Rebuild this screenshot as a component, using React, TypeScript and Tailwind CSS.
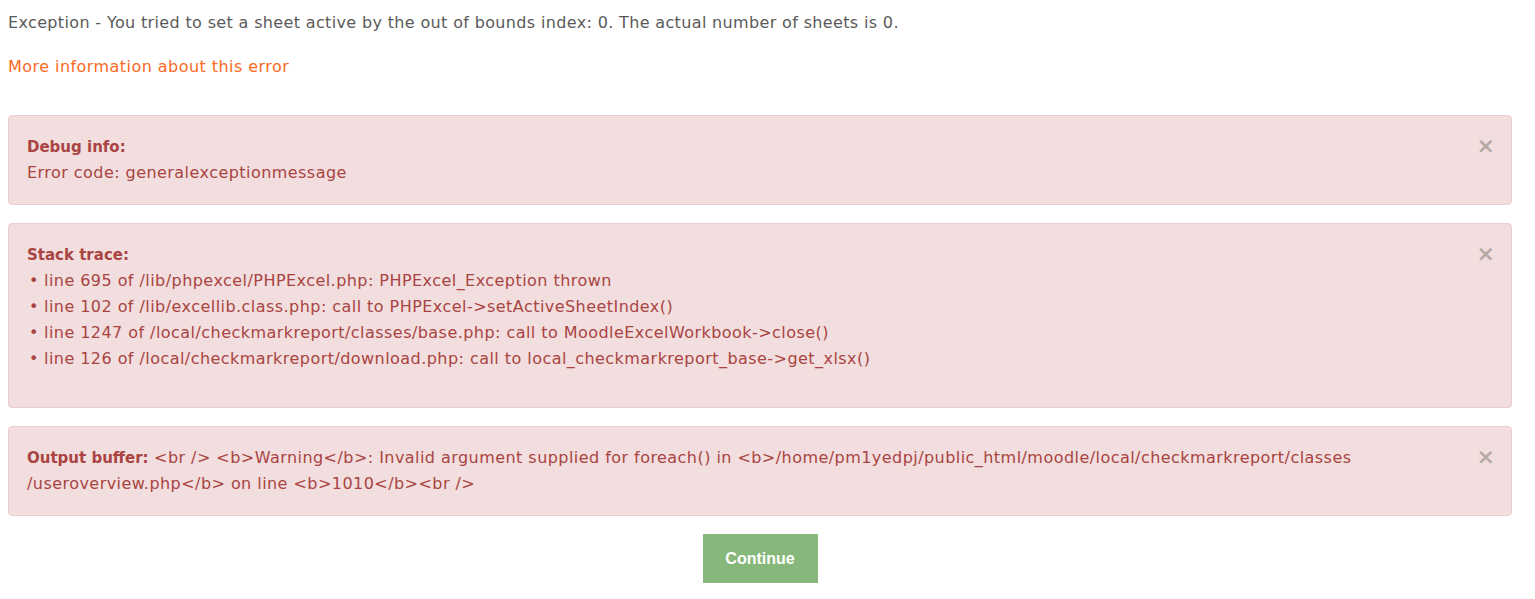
const stack = [
  'line 695 of /lib/phpexcel/PHPExcel.php: PHPExcel_Exception thrown',
  'line 102 of /lib/excellib.class.php: call to PHPExcel->setActiveSheetIndex()',
  'line 1247 of /local/checkmarkreport/classes/base.php: call to MoodleExcelWorkbook->close()',
  'line 126 of /local/checkmarkreport/download.php: call to local_checkmarkreport_base->get_xlsx()',
]

function Alert({ children }: { children: React.ReactNode }) {
  return (
    <div className="mb-[18px] flex items-start justify-between rounded-[4px] border border-[#ebccd1] bg-[#f2dede] py-[18px] pl-[18px] pr-[16px] text-[#a94442]">
      <div className="min-w-0 flex-1">{children}</div>
      <span className="ml-4 mt-[3px] text-[22px] font-bold leading-[18px] tracking-normal text-[#b7a8a8]">×</span>
    </div>
  )
}

function Bold({ children }: { children: React.ReactNode }) {
  return <span className="text-[15px] font-bold tracking-normal">{children}</span>
}

export default function App() {
  return (
    <div
      className="w-[1520px] bg-white px-2 pt-[10px] text-[16px] leading-[26px] tracking-[0.45px] text-[#5a5a5a]"
      style={{ fontFamily: '"DejaVu Sans", sans-serif' }}
    >
      <p className="tracking-[0.35px]">
        Exception - You tried to set a sheet active by the out of bounds index: 0. The actual number of sheets is 0.
      </p>
      <p className="mt-[18px]">
        <a href="#" className="text-[#fa6a24]">
          More information about this error
        </a>
      </p>

      <div className="mt-[35px]">
        <Alert>
          <div>
            <Bold>Debug info:</Bold>
          </div>
          <div>Error code: generalexceptionmessage</div>
        </Alert>

        <Alert>
          <div>
            <Bold>Stack trace:</Bold>
          </div>
          <ul className="mb-[17px]">
            {stack.map((s) => (
              <li key={s} className="flex">
                <span className="w-[17px] shrink-0 pl-[2px] tracking-normal">•</span>
                <span>{s}</span>
              </li>
            ))}
          </ul>
        </Alert>

        <Alert>
          <div>
            <Bold>Output buffer:</Bold> &lt;br /&gt; &lt;b&gt;Warning&lt;/b&gt;: Invalid argument supplied for foreach()
            in &lt;b&gt;/home/pm1yedpj/public_html/moodle/local/checkmarkreport/classes
            <br />
            /useroverview.php&lt;/b&gt; on line &lt;b&gt;1010&lt;/b&gt;&lt;br /&gt;
          </div>
        </Alert>
      </div>

      <div className="flex justify-center pb-4">
        <button
          className="h-[49px] w-[115px] bg-[#86b77b] text-[16px] font-bold tracking-normal text-white"
          style={{ fontFamily: '"Liberation Sans", Arial, sans-serif' }}
        >
          Continue
        </button>
      </div>
    </div>
  )
}
